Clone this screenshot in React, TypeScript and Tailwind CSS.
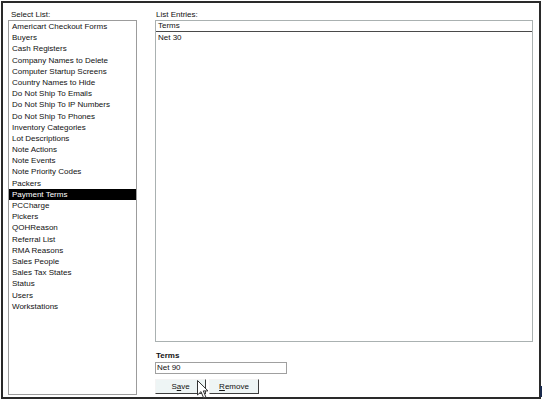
import React from "react";

const items = [
  "Americart Checkout Forms",
  "Buyers",
  "Cash Registers",
  "Company Names to Delete",
  "Computer Startup Screens",
  "Country Names to Hide",
  "Do Not Ship To Emails",
  "Do Not Ship To IP Numbers",
  "Do Not Ship To Phones",
  "Inventory Categories",
  "Lot Descriptions",
  "Note Actions",
  "Note Events",
  "Note Priority Codes",
  "Packers",
  "Payment Terms",
  "PCCharge",
  "Pickers",
  "QOHReason",
  "Referral List",
  "RMA Reasons",
  "Sales People",
  "Sales Tax States",
  "Status",
  "Users",
  "Workstations",
];

export default function App() {
  return (
    <div
      className="relative w-[542px] h-[403px] bg-white text-[#111111] text-[8px]"
      style={{ fontFamily: '"Liberation Sans", Arial, sans-serif' }}
    >
      <div className="ml-[1px] pt-[1px]">
        <div className="w-[540px] h-[398px] border-2 border-[#2a2a2a] flex pl-[5px] pt-[6px]">
          {/* Left column */}
          <div className="w-[129px] flex flex-col">
            <div className="h-[11px] leading-[11px] pl-[3px]">Select List:</div>
            <div className="h-[375px] border border-[#9c9c9c] bg-white">
              {items.map((it) => (
                <div
                  key={it}
                  className={
                    it === "Payment Terms"
                      ? "h-[11.2px] leading-[11.2px] pl-[3px] bg-black text-white"
                      : "h-[11.2px] leading-[11.2px] pl-[3px]"
                  }
                >
                  {it}
                </div>
              ))}
            </div>
          </div>

          {/* Right column */}
          <div className="ml-[18px] w-[378px] flex flex-col">
            <div className="h-[11px] leading-[11px] pl-[1px]">List Entries:</div>
            <div className="h-[322px] border border-[#aab1b1] bg-white">
              <div className="h-[11px] leading-[10px] pl-[2px] border-b border-[#4a4a4a]">
                Terms
              </div>
              <div className="h-[11px] leading-[11px] pl-[2px]">Net 30</div>
            </div>
            <div className="mt-[8px] h-[11px] leading-[11px] pl-[1px] font-bold">Terms</div>
            <div className="mt-[1px] w-[132px] h-[12px] border border-[#a0a0a0] leading-[10px] pl-[1px]">
              Net 90
            </div>
            <div className="mt-[5px] flex gap-[3px]">
              <button className="w-[51px] h-[15px] bg-[#eef5f5] border border-t-[#f4f4f4] border-l-[#f4f4f4] border-r-[#3c3c3c] border-b-[#3c3c3c] text-[8px] leading-[13px] text-center">
                S<span className="underline">a</span>ve
              </button>
              <button className="w-[50px] h-[15px] bg-[#eef5f5] border border-t-[#f4f4f4] border-l-[#f4f4f4] border-r-[#3c3c3c] border-b-[#3c3c3c] text-[8px] leading-[13px] text-center">
                <span className="underline">R</span>emove
              </button>
            </div>
          </div>
        </div>
      </div>

      {/* mouse cursor */}
      <svg
        className="absolute left-[197px] top-[380px]"
        width="12"
        height="19"
        viewBox="0 0 12 19"
      >
        <path
          d="M0.5 0.5 L0.5 15 L4 11.6 L6.6 17.8 L8.8 16.9 L6.3 10.9 L11 10.9 Z"
          fill="white"
          stroke="#333"
          strokeWidth="1"
          strokeLinejoin="round"
        />
      </svg>

      {/* corner artifact */}
      <div className="absolute left-[540px] top-[386px] w-[2px] h-[11px] bg-[#1b2b4d]" />
    </div>
  );
}
